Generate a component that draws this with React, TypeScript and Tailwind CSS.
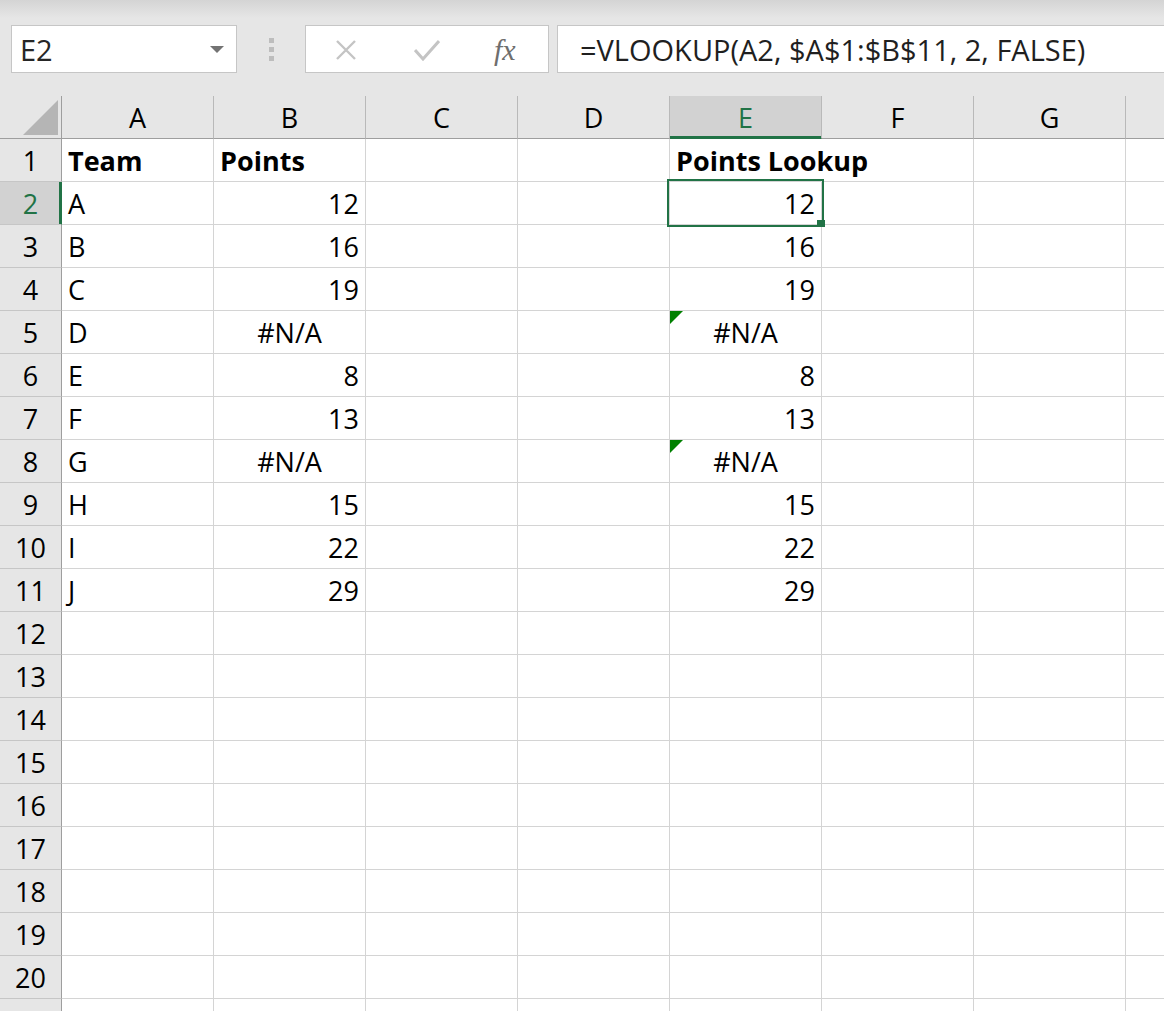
import React from "react";

const COLS = ["A", "B", "C", "D", "E", "F", "G"];
const VALUES = ["12", "16", "19", "#N/A", "8", "13", "#N/A", "15", "22", "29"];
const TEAMS = ["A", "B", "C", "D", "E", "F", "G", "H", "I", "J"];

type Cell = { text: string; bold?: boolean; align: "left" | "right" | "center" };

function cellFor(row: number, col: string): Cell | null {
  if (row === 1) {
    if (col === "A") return { text: "Team", bold: true, align: "left" };
    if (col === "B") return { text: "Points", bold: true, align: "left" };
    if (col === "E") return { text: "Points Lookup", bold: true, align: "left" };
    return null;
  }
  const i = row - 2;
  if (i > 9) return null;
  if (col === "A") return { text: TEAMS[i], align: "left" };
  if (col === "B" || col === "E") {
    const v = VALUES[i];
    return { text: v, align: v === "#N/A" ? "center" : "right" };
  }
  return null;
}

function Toolbar() {
  return (
    <div className="h-[96px] bg-[linear-gradient(to_bottom,#d4d4d4,#e6e6e6_18px)] pt-[25px]">
      <div className="flex h-[48px] items-stretch">
        <div className="ml-[11px] flex w-[226px] items-center justify-between border border-[#c6c6c6] bg-white pl-[8px] pr-[12px]">
          <span className="text-[29px] leading-none text-[#262626]">E2</span>
          <svg width="14" height="7" viewBox="0 0 14 7">
            <polygon points="0,0 14,0 7,7" fill="#737373" />
          </svg>
        </div>
        <div className="flex w-[68px] flex-col items-center justify-center gap-[4px]">
          <span className="h-[5px] w-[5px] bg-[#bdbdbd]" />
          <span className="h-[5px] w-[5px] bg-[#bdbdbd]" />
          <span className="h-[5px] w-[5px] bg-[#bdbdbd]" />
        </div>
        <div className="relative w-[244px] border border-[#c6c6c6] bg-white">
          <svg className="absolute left-[30px] top-[14px]" width="20" height="20" viewBox="0 0 20 20">
            <path d="M1 1 L19 19 M19 1 L1 19" stroke="#c4c4c4" strokeWidth="2.4" />
          </svg>
          <svg className="absolute left-[108px] top-[13px]" width="26" height="22" viewBox="0 0 26 22">
            <path d="M1 11 L9 20 L25 2" stroke="#c4c4c4" strokeWidth="3" fill="none" />
          </svg>
          <span className="absolute left-[188px] top-[1px] font-['Liberation_Serif',serif] text-[30px] italic text-[#6e6e6e]">
            fx
          </span>
        </div>
        <div className="ml-[8px] flex flex-1 items-center border border-r-0 border-[#c6c6c6] bg-white pl-[22px]">
          <span className="whitespace-nowrap text-[29px] leading-none text-[#1f1f1f]">
            =VLOOKUP(A2, $A$1:$B$11, 2, FALSE)
          </span>
        </div>
      </div>
    </div>
  );
}

function HeaderRow() {
  return (
    <div className="grid h-[43px] grid-cols-[62px_repeat(7,152px)_1fr] grid-rows-[43px] text-[27px] leading-none">
      <div className="relative border-b border-r border-[#9e9e9e]">
        <div className="absolute left-[23px] top-[4px] h-[35px] w-[35px] bg-[#b5b5b5] [clip-path:polygon(100%_0,100%_100%,0_100%)]" />
      </div>
      {COLS.map((c) =>
        c === "E" ? (
          <div
            key={c}
            className="flex items-center justify-center border-b border-r border-b-[#217346] border-r-[#b9b9b9] bg-[#d2d2d2] text-[#217346] shadow-[inset_0_-2px_0_#217346]"
          >
            {c}
          </div>
        ) : (
          <div
            key={c}
            className="flex items-center justify-center border-b border-r border-b-[#9e9e9e] border-r-[#b9b9b9] text-black"
          >
            {c}
          </div>
        )
      )}
      <div className="border-b border-[#9e9e9e]" />
    </div>
  );
}

function Row({ n }: { n: number }) {
  const selectedRow = n === 2;
  return (
    <div className="grid h-[43px] grid-cols-[62px_repeat(7,152px)_1fr] grid-rows-[43px] text-[27px] leading-none">
      <div
        className={
          selectedRow
            ? "flex items-center justify-center border-b border-r border-b-[#c6c6c6] border-r-[#217346] bg-[#d2d2d2] pt-[1px] text-[#217346] shadow-[inset_-2px_0_0_#217346]"
            : "flex items-center justify-center border-b border-r border-b-[#c6c6c6] border-r-[#9e9e9e] pt-[1px] text-black"
        }
      >
        {n <= 20 ? n : ""}
      </div>
      {COLS.map((c) => {
        const cell = cellFor(n, c);
        const isSel = n === 2 && c === "E";
        const hasFlag = c === "E" && cell?.text === "#N/A";
        const overflowing = n === 1 && c === "E";
        return (
          <div
            key={c}
            className={
              "relative flex items-center whitespace-nowrap border-b border-r border-[#d4d4d4] bg-white px-[6px] pt-[1px] text-black " +
              (overflowing ? "border-r-white " : "") +
              (cell?.align === "right"
                ? "justify-end"
                : cell?.align === "center"
                ? "justify-center"
                : "justify-start")
            }
          >
            {hasFlag && (
              <div className="absolute left-0 top-0 h-[13px] w-[13px] bg-[#008000] [clip-path:polygon(0_0,100%_0,0_100%)]" />
            )}
            {cell && (
              <span className={"relative z-10 " + (cell.bold ? "font-bold" : "")}>{cell.text}</span>
            )}
            {isSel && (
              <>
                <div className="absolute -left-[3px] -top-[3px] z-20 h-[48px] w-[157px] border-2 border-[#217346]" />
                <div className="absolute left-[147px] top-[38px] z-20 h-[7px] w-[8px] bg-[#217346]" />
              </>
            )}
          </div>
        );
      })}
      <div className="border-b border-[#d4d4d4] bg-white" />
    </div>
  );
}

export default function App() {
  return (
    <div className="h-[1011px] w-[1164px] overflow-hidden bg-[#e6e6e6] font-['Open_Sans',sans-serif]">
      <Toolbar />
      <HeaderRow />
      {Array.from({ length: 21 }, (_, i) => (
        <Row key={i} n={i + 1} />
      ))}
    </div>
  );
}
